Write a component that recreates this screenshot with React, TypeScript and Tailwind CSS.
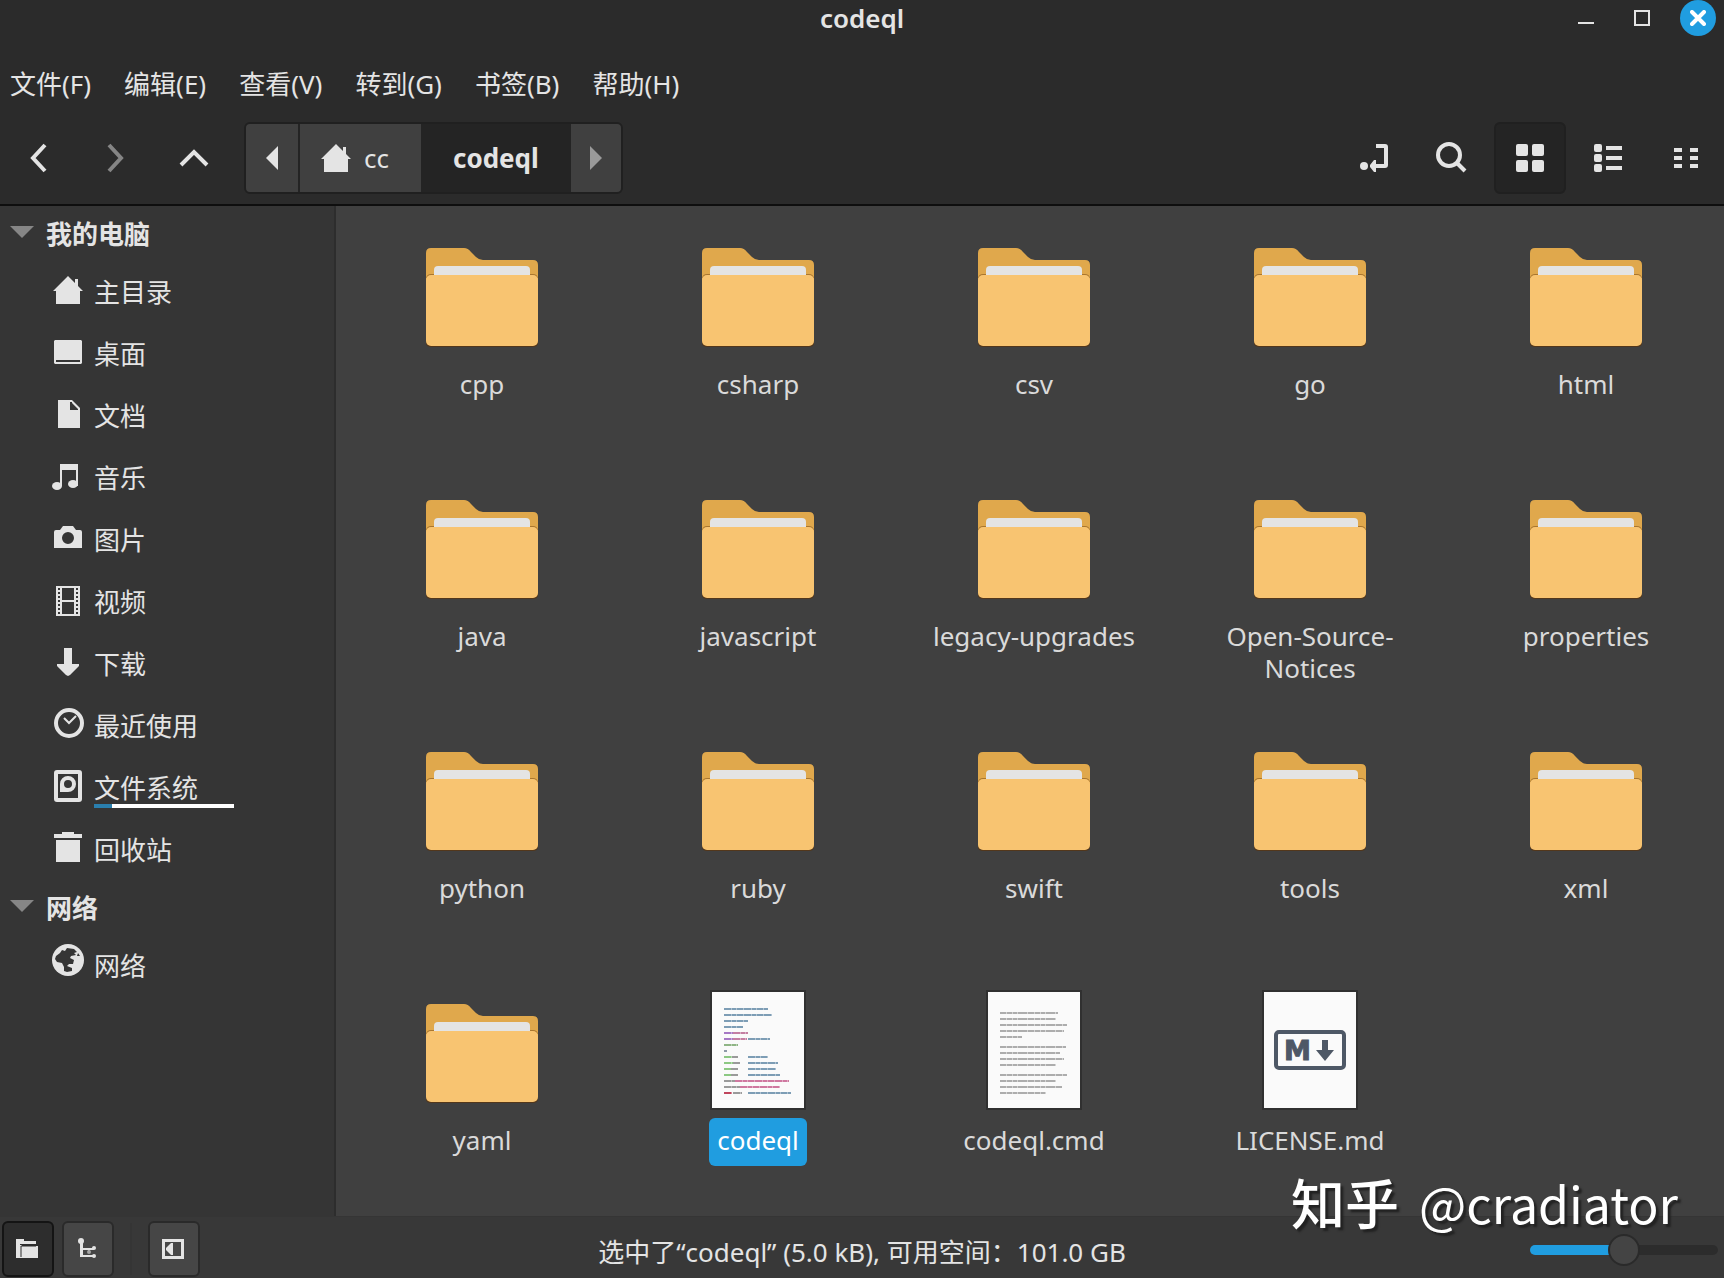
import type { ReactNode } from 'react';

type Place = { name: string; icon: ReactNode; usage?: number };

const homeShape = <path d="M16 2 L23 9 V5 H26 V12 L31 17 H28 V30 H4 V17 H1 Z" />;

const places: Place[] = [
  { name: '主目录', icon: homeShape },
  {
    name: '桌面',
    icon: <path fillRule="evenodd" d="M3 4 H29 L30 5 V27 L29 28 H3 L2 27 V5 Z M4 24 V26 H28 V24 Z" />,
  },
  {
    name: '文档',
    icon: <path fillRule="evenodd" d="M6 2 H20 L28 10 V30 H6 Z M18 4 V12 H26 V11 L20 5 V4 Z" />,
  },
  {
    name: '音乐',
    icon: (
      <>
        <path d="M8 4 H26 V26 H24 V10 H10 V26 H8 Z" />
        <ellipse cx="5" cy="26" rx="5" ry="4" />
        <ellipse cx="21" cy="24" rx="5" ry="4" />
      </>
    ),
  },
  {
    name: '图片',
    icon: (
      <path
        fillRule="evenodd"
        d="M11 4 H21 L24 8 H28 Q30 8 30 10 V26 H2 V10 Q2 8 4 8 H8 Z M16 10 A6 6 0 1 0 16 22 A6 6 0 1 0 16 10 Z"
      />
    ),
  },
  {
    name: '视频',
    icon: (
      <>
        <path fillRule="evenodd" d="M4 2 H28 V32 H4 Z M10 4 V16 H22 V4 Z M10 18 V30 H22 V18 Z" />
        <path d="M7 4 V31 M25 4 V31" stroke="#353535" strokeWidth="2" strokeDasharray="2 2" />
      </>
    ),
  },
  { name: '下载', icon: <path d="M12 2 H20 V18 H27 V20 L18 29 L16 30 L14 29 L5 20 V18 H12 Z" /> },
  {
    name: '最近使用',
    icon: (
      <g fill="none" stroke="currentColor">
        <circle cx="17" cy="15" r="13" strokeWidth="4" />
        <path d="M12 10 L17 15 L24 8" strokeWidth="2" />
      </g>
    ),
  },
  {
    name: '文件系统',
    usage: 13,
    icon: (
      <>
        <rect x="4" y="2" width="24" height="28" rx="1" fill="none" stroke="currentColor" strokeWidth="4" />
        <path fillRule="evenodd" d="M16 6 A8 8 0 1 1 16 22 H8 V14 A8 8 0 0 1 16 6 Z M16 10 A4 4 0 1 0 16 18 A4 4 0 1 0 16 10 Z" />
      </>
    ),
  },
  { name: '回收站', icon: <path d="M10 0 H22 V2 H30 V6 H2 V2 H10 Z M4 8 H28 V30 H4 Z" /> },
];

const network: Place[] = [
  {
    name: '网络',
    icon: (
      <g transform="translate(0 -4)">
        <circle cx="16" cy="16" r="16" />
        <path
          d="M4 12 L8 9 L10 6 L13 7 L15 4 L22 5 L25 8 L22 9 L24 11 L19 12 L18 14 L22 16 L21 20 L17 20 L15 22 L20 24 L20 27 L15 28 L12 27 L12 23 L10 19 L5 18 L3 15 Z"
          fill="#353535"
        />
        <path d="M26 9 L28 12 L25 12 Z" fill="#353535" />
      </g>
    ),
  },
];

const menus = ['文件(F)', '编辑(E)', '查看(V)', '转到(G)', '书签(B)', '帮助(H)'];

const files = [
  { name: 'cpp', kind: 'folder' },
  { name: 'csharp', kind: 'folder' },
  { name: 'csv', kind: 'folder' },
  { name: 'go', kind: 'folder' },
  { name: 'html', kind: 'folder' },
  { name: 'java', kind: 'folder' },
  { name: 'javascript', kind: 'folder' },
  { name: 'legacy-upgrades', kind: 'folder' },
  { name: 'Open-Source-Notices', kind: 'folder' },
  { name: 'properties', kind: 'folder' },
  { name: 'python', kind: 'folder' },
  { name: 'ruby', kind: 'folder' },
  { name: 'swift', kind: 'folder' },
  { name: 'tools', kind: 'folder' },
  { name: 'xml', kind: 'folder' },
  { name: 'yaml', kind: 'folder' },
  { name: 'codeql', kind: 'script', selected: true },
  { name: 'codeql.cmd', kind: 'text' },
  { name: 'LICENSE.md', kind: 'markdown' },
];

// [x1, x2, y, colour]
const codeLines: [number, number, number, string][] = [
  [12, 56, 17, '#7d9db5'],
  [12, 60, 23, '#7d9db5'],
  [12, 36, 29, '#7d9db5'],
  [12, 31, 35, '#7d9db5'],
  [12, 21, 41, '#a678c4'],
  [21, 36, 41, '#c47fa2'],
  [12, 21, 47, '#a678c4'],
  [21, 35, 47, '#c47fa2'],
  [36, 58, 47, '#7d9db5'],
  [12, 26, 53, '#8fb585'],
  [12, 15, 59, '#8e9aa8'],
  [12, 20, 65, '#8cc882'],
  [20, 26, 65, '#9a9a9a'],
  [36, 56, 65, '#7d9db5'],
  [12, 21, 71, '#8cc882'],
  [21, 28, 71, '#9a9a9a'],
  [36, 66, 71, '#7d9db5'],
  [12, 19, 77, '#8cc882'],
  [19, 26, 77, '#9a9a9a'],
  [36, 64, 77, '#7d9db5'],
  [12, 19, 83, '#8cc882'],
  [19, 26, 83, '#9a9a9a'],
  [36, 68, 83, '#7d9db5'],
  [12, 23, 89, '#9a9a9a'],
  [23, 77, 89, '#cf78a0'],
  [12, 28, 95, '#9a9a9a'],
  [28, 68, 95, '#cf78a0'],
  [12, 20, 101, '#c0455c'],
  [21, 30, 101, '#9a9a9a'],
  [36, 79, 101, '#7d9db5'],
];

const textLines = [
  [70, 21], [68, 27], [79, 33], [76, 39], [34, 45],
  [78, 55], [72, 61], [76, 67], [68, 73],
  [79, 83], [68, 89], [74, 95], [58, 101],
];

function FolderIcon() {
  return (
    <svg width="112" height="100" viewBox="0 0 112 100" className="mt-2" aria-hidden="true">
      <path d="M0 96 V92 H112 V96 Q111 99 107 99 H5 Q1 99 0 96 Z" fill="#53371b" />
      <path d="M0 5 Q0 0 5 0 H38 Q42 0 45 4 L50 9 Q53 12 57 12 H107 Q112 12 112 17 V60 H0 Z" fill="#e0a84c" />
      <path d="M0 30 Q1 26 5 26 H107 Q111 26 112 30 Z" fill="#a9762f" />
      <path d="M8 34 V22 Q8 18 12 18 H100 Q104 18 104 22 V34 Z" fill="#e4e4e4" />
      <rect y="27" width="112" height="71" rx="5" fill="#f8c471" />
    </svg>
  );
}

function FileIcon({ kind }: { kind: string }) {
  return (
    <svg width="96" height="120" viewBox="-2 -2 96 120" aria-hidden="true">
      <rect x="-1" y="-1" width="94" height="118" fill="#fafafa" stroke="#303030" strokeWidth="2" />
      {kind === 'script' &&
        codeLines.map(([x1, x2, y, color]) => (
          <g key={`${x1}-${y}`} stroke={color} strokeWidth="2">
            <path d={`M${x1} ${y} H${x2}`} strokeOpacity="0.6" />
            <path d={`M${x1} ${y} H${x2}`} strokeDasharray="7 1 4 1 6 1" />
          </g>
        ))}
      {kind === 'text' &&
        textLines.map(([x2, y]) => (
          <g key={y} stroke="#adadad" strokeWidth="2">
            <path d={`M12 ${y} H${x2}`} strokeOpacity="0.5" />
            <path d={`M12 ${y} H${x2}`} strokeDasharray="6 1 5 1 4 1 9 1" />
          </g>
        ))}
      {kind === 'markdown' && (
        <>
          <rect x="12" y="40" width="68" height="36" rx="3" fill="none" stroke="#4e5866" strokeWidth="4" />
          <text
            x="20"
            y="68"
            fontSize="27"
            fontWeight="700"
            fontFamily="DejaVu Sans, sans-serif"
            fill="#4e5866"
            stroke="#4e5866"
            strokeWidth="1"
          >
            M
          </text>
          <path d="M58 48 H64 V58 H70 L61 69 L52 58 H58 Z" fill="#4e5866" />
        </>
      )}
    </svg>
  );
}

function ToolButton({ label, active, children }: { label: string; active?: boolean; children: ReactNode }) {
  return (
    <button
      aria-label={label}
      className={`flex size-[72px] items-center justify-center rounded-md border-2 ${
        active ? 'border-[#202020] bg-[#242424]' : 'border-transparent'
      }`}
    >
      <svg width="32" height="32" viewBox="0 0 32 32" fill="currentColor" aria-hidden="true">
        {children}
      </svg>
    </button>
  );
}

function PlaceGroup({ title, items }: { title: string; items: Place[] }) {
  return (
    <section>
      <h2 className="flex h-[54px] items-center gap-3 pl-2.5 font-bold">
        <svg width="24" height="12" viewBox="0 0 24 12" className="mb-1" aria-hidden="true">
          <path d="M0 0 H24 L12 12 Z" fill="#868686" />
        </svg>
        {title}
      </h2>
      <ul>
        {items.map((place) => (
          <li key={place.name}>
            <a href="#" className="flex h-[62px] items-center gap-2.5 pl-[52px]">
              <svg width="32" height="32" viewBox="0 0 32 32" fill="currentColor" className="mb-1 overflow-visible" aria-hidden="true">
                {place.icon}
              </svg>
              <span className="relative">
                {place.name}
                {place.usage && (
                  <span className="absolute -bottom-1 left-0 h-1 w-[140px] bg-white">
                    <span className="block h-full bg-[#2a7fae]" style={{ width: `${place.usage}%` }} />
                  </span>
                )}
              </span>
            </a>
          </li>
        ))}
      </ul>
    </section>
  );
}

export default function App() {
  return (
    <div className="relative flex min-h-screen flex-col bg-[#404040] font-['Noto_Sans','Noto_Sans_CJK_SC',sans-serif] text-[26px] leading-8 text-[#e4e4e4]">
      <header className="border-b-2 border-[#0e0e0e] bg-[#2b2b2b]">
        {/* Title bar */}
        <div className="grid h-9 grid-cols-[1fr_auto_1fr] items-center">
          <h1 className="col-start-2 font-semibold">codeql</h1>
          <div className="flex items-center justify-end gap-5 pr-2">
            <button aria-label="最小化" className="flex size-9 items-center justify-center">
              <svg width="16" height="16" viewBox="0 0 16 16" aria-hidden="true">
                <path d="M0 13 H16" stroke="#e4e4e4" strokeWidth="2" />
              </svg>
            </button>
            <button aria-label="最大化" className="flex size-9 items-center justify-center">
              <svg width="16" height="16" viewBox="0 0 16 16" aria-hidden="true">
                <rect x="1" y="1" width="14" height="14" fill="none" stroke="#e4e4e4" strokeWidth="2" />
              </svg>
            </button>
            <button aria-label="关闭" className="flex size-9 items-center justify-center rounded-full bg-[#209de0]">
              <svg width="16" height="16" viewBox="0 0 16 16" aria-hidden="true">
                <path d="M2 2 L14 14 M14 2 L2 14" stroke="#fff" strokeWidth="4" strokeLinecap="round" />
              </svg>
            </button>
          </div>
        </div>

        {/* Menu bar */}
        <nav className="mt-6 flex h-12 items-center gap-[33px] pl-2.5">
          {menus.map((menu) => (
            <button key={menu}>{menu}</button>
          ))}
        </nav>

        {/* Toolbar */}
        <div className="mt-3.5 flex items-center justify-between px-0.5 pb-2.5">
          <div className="flex items-center gap-1.5">
            <ToolButton label="后退">
              <path d="M23 3 L11 16 L23 29" fill="none" stroke="currentColor" strokeWidth="4" />
            </ToolButton>
            <ToolButton label="前进">
              <path d="M9 3 L21 16 L9 29" fill="none" stroke="#858585" strokeWidth="4" />
            </ToolButton>
            <ToolButton label="向上">
              <path d="M3 23 L16 10 L29 23" fill="none" stroke="currentColor" strokeWidth="4" />
            </ToolButton>
            <div className="ml-2 flex h-[72px] overflow-hidden rounded-md border-2 border-[#202020] bg-[#404040]">
              <button aria-label="向左滚动" className="flex w-[54px] items-center justify-center border-r-2 border-[#242424]">
                <svg width="12" height="24" viewBox="0 0 12 24" aria-hidden="true">
                  <path d="M12 0 V24 L0 12 Z" fill="#e4e4e4" />
                </svg>
              </button>
              <button className="flex items-center gap-3 pl-5 pr-8">
                <svg width="32" height="32" viewBox="0 0 32 32" fill="currentColor" aria-hidden="true">
                  {homeShape}
                </svg>
                cc
              </button>
              <button className="bg-[#242424] px-8 font-bold">codeql</button>
              <button aria-label="向右滚动" className="flex w-[50px] items-center justify-center">
                <svg width="12" height="24" viewBox="0 0 12 24" aria-hidden="true">
                  <path d="M0 0 V24 L12 12 Z" fill="#9a9a9a" />
                </svg>
              </button>
            </div>
          </div>
          <div className="flex items-center gap-1.5">
            <ToolButton label="切换位置栏">
              <path d="M18 2 H27 Q30 2 30 5 V23 Q30 26 27 26 H18 V30 H16 L12 25 V23 L16 18 H18 V22 H26 V6 H18 Z" />
              <circle cx="6" cy="24" r="4" />
            </ToolButton>
            <ToolButton label="搜索">
              <g fill="none" stroke="currentColor" strokeWidth="4">
                <circle cx="13" cy="13" r="11" />
                <path d="M21 21 L29 29" />
              </g>
            </ToolButton>
            <ToolButton label="图标视图" active>
              <rect x="2" y="2" width="12" height="12" rx="2" />
              <rect x="18" y="2" width="12" height="12" rx="2" />
              <rect x="2" y="18" width="12" height="12" rx="2" />
              <rect x="18" y="18" width="12" height="12" rx="2" />
            </ToolButton>
            <ToolButton label="列表视图">
              <rect x="2" y="2" width="8" height="8" rx="2" />
              <rect x="2" y="12" width="8" height="8" rx="2" />
              <rect x="2" y="22" width="8" height="8" rx="2" />
              <path d="M14 4 H30 V8 H14 Z M14 14 H30 V18 H14 Z M14 24 H30 V28 H14 Z" />
            </ToolButton>
            <ToolButton label="紧凑视图">
              <path d="M4 6 H12 V10 H4 Z M20 6 H28 V10 H20 Z M4 14 H12 V18 H4 Z M20 14 H28 V18 H20 Z M4 22 H12 V26 H4 Z M20 22 H28 V26 H20 Z" />
            </ToolButton>
          </div>
        </div>
      </header>

      <div className="flex flex-1">
        <aside className="w-84 shrink-0 border-r-2 border-[#2d2d2d] bg-[#353535] pt-px">
          <PlaceGroup title="我的电脑" items={places} />
          <PlaceGroup title="网络" items={network} />
        </aside>

        <main className="grid flex-1 auto-rows-[212px] grid-cols-5 content-start gap-y-10 pl-2 pt-6">
          {files.map((file) => (
            <figure key={file.name} className="flex flex-col items-center gap-1">
              <div className="flex h-32 items-center justify-center">
                {file.kind === 'folder' ? <FolderIcon /> : <FileIcon kind={file.kind} />}
              </div>
              <figcaption
                className={`max-w-56 rounded-md px-2 pb-2.5 pt-1.5 text-center ${
                  file.selected ? 'bg-[#209de0] text-white' : 'text-[#dadada]'
                }`}
              >
                {file.name}
              </figcaption>
            </figure>
          ))}
        </main>
      </div>

      {/* Status bar */}
      <footer className="grid h-[62px] grid-cols-[1fr_auto_1fr] items-end border-t border-[#353535] bg-[#383838]">
        <div className="flex items-center gap-2 pb-px pl-0.5">
          <button aria-label="位置" className="flex h-14 w-[52px] items-center justify-center rounded-md border-2 border-[#141414] bg-[#2d2d2d]">
            <svg width="24" height="24" viewBox="0 0 24 24" fill="#e4e4e4" aria-hidden="true">
              <path d="M0 2 H8 V4 H20 V7 H4 V21 H0 Z M6 9 H22 V21 H4 V8 H6 Z" />
              <path d="M5 20 V9 H20" fill="none" stroke="#2d2d2d" strokeWidth="1" />
            </svg>
          </button>
          <button aria-label="目录树" className="flex h-14 w-[52px] items-center justify-center rounded-md border-2 border-[#2a2a2a] bg-[#464646]">
            <svg width="24" height="24" viewBox="0 0 24 24" fill="#e4e4e4" aria-hidden="true">
              <circle cx="5" cy="4" r="3" />
              <path d="M4 5 H7 V11 H18 V13 H7 V18 H18 V20 H4 Z" />
              <path d="M12 14 L17 11" stroke="#e4e4e4" />
              <circle cx="18" cy="11" r="2" />
              <circle cx="13" cy="15" r="2" fill="#a5a5a5" />
              <circle cx="18" cy="19" r="2" />
            </svg>
          </button>
          <div className="mx-2 h-13 w-0.5 bg-[#353535]" />
          <button aria-label="隐藏侧边栏" className="flex h-14 w-[52px] items-center justify-center rounded-md border-2 border-[#2a2a2a] bg-[#464646]">
            <svg width="24" height="24" viewBox="0 0 24 24" fill="#e4e4e4" aria-hidden="true">
              <path fillRule="evenodd" d="M0 2 H22 V22 H0 Z M3 5 V19 H19 V5 Z" />
              <path d="M11 6 V18 H9 L4 13 V11 L9 6 Z" />
            </svg>
          </button>
        </div>
        <p className="pb-2.5">选中了“codeql” (5.0 kB), 可用空间：101.0 GB</p>
        <input
          type="range"
          aria-label="图标缩放"
          defaultValue={50}
          className="mb-3 mr-1.5 h-8 w-[188px] appearance-none justify-self-end bg-transparent [&::-webkit-slider-runnable-track]:h-2.5 [&::-webkit-slider-runnable-track]:rounded-full [&::-webkit-slider-runnable-track]:bg-linear-to-r [&::-webkit-slider-runnable-track]:from-[#209de0] [&::-webkit-slider-runnable-track]:from-50% [&::-webkit-slider-runnable-track]:to-[#2c2c2c] [&::-webkit-slider-runnable-track]:to-50% [&::-webkit-slider-thumb]:-mt-[11px] [&::-webkit-slider-thumb]:size-8 [&::-webkit-slider-thumb]:appearance-none [&::-webkit-slider-thumb]:rounded-full [&::-webkit-slider-thumb]:border-2 [&::-webkit-slider-thumb]:border-[#2a2a2a] [&::-webkit-slider-thumb]:bg-[#444444]"
        />
      </footer>

      {/* Watermark */}
      <div className="pointer-events-none absolute bottom-10 right-[46px] flex items-center gap-5 whitespace-nowrap font-['Noto_Sans_CJK_SC',sans-serif] text-[50px] leading-[72px] text-white [text-shadow:3px_3px_2px_#222222]">
        <span className="text-[54px] font-medium">知乎</span>
        <span>@cradiator</span>
      </div>
    </div>
  );
}
